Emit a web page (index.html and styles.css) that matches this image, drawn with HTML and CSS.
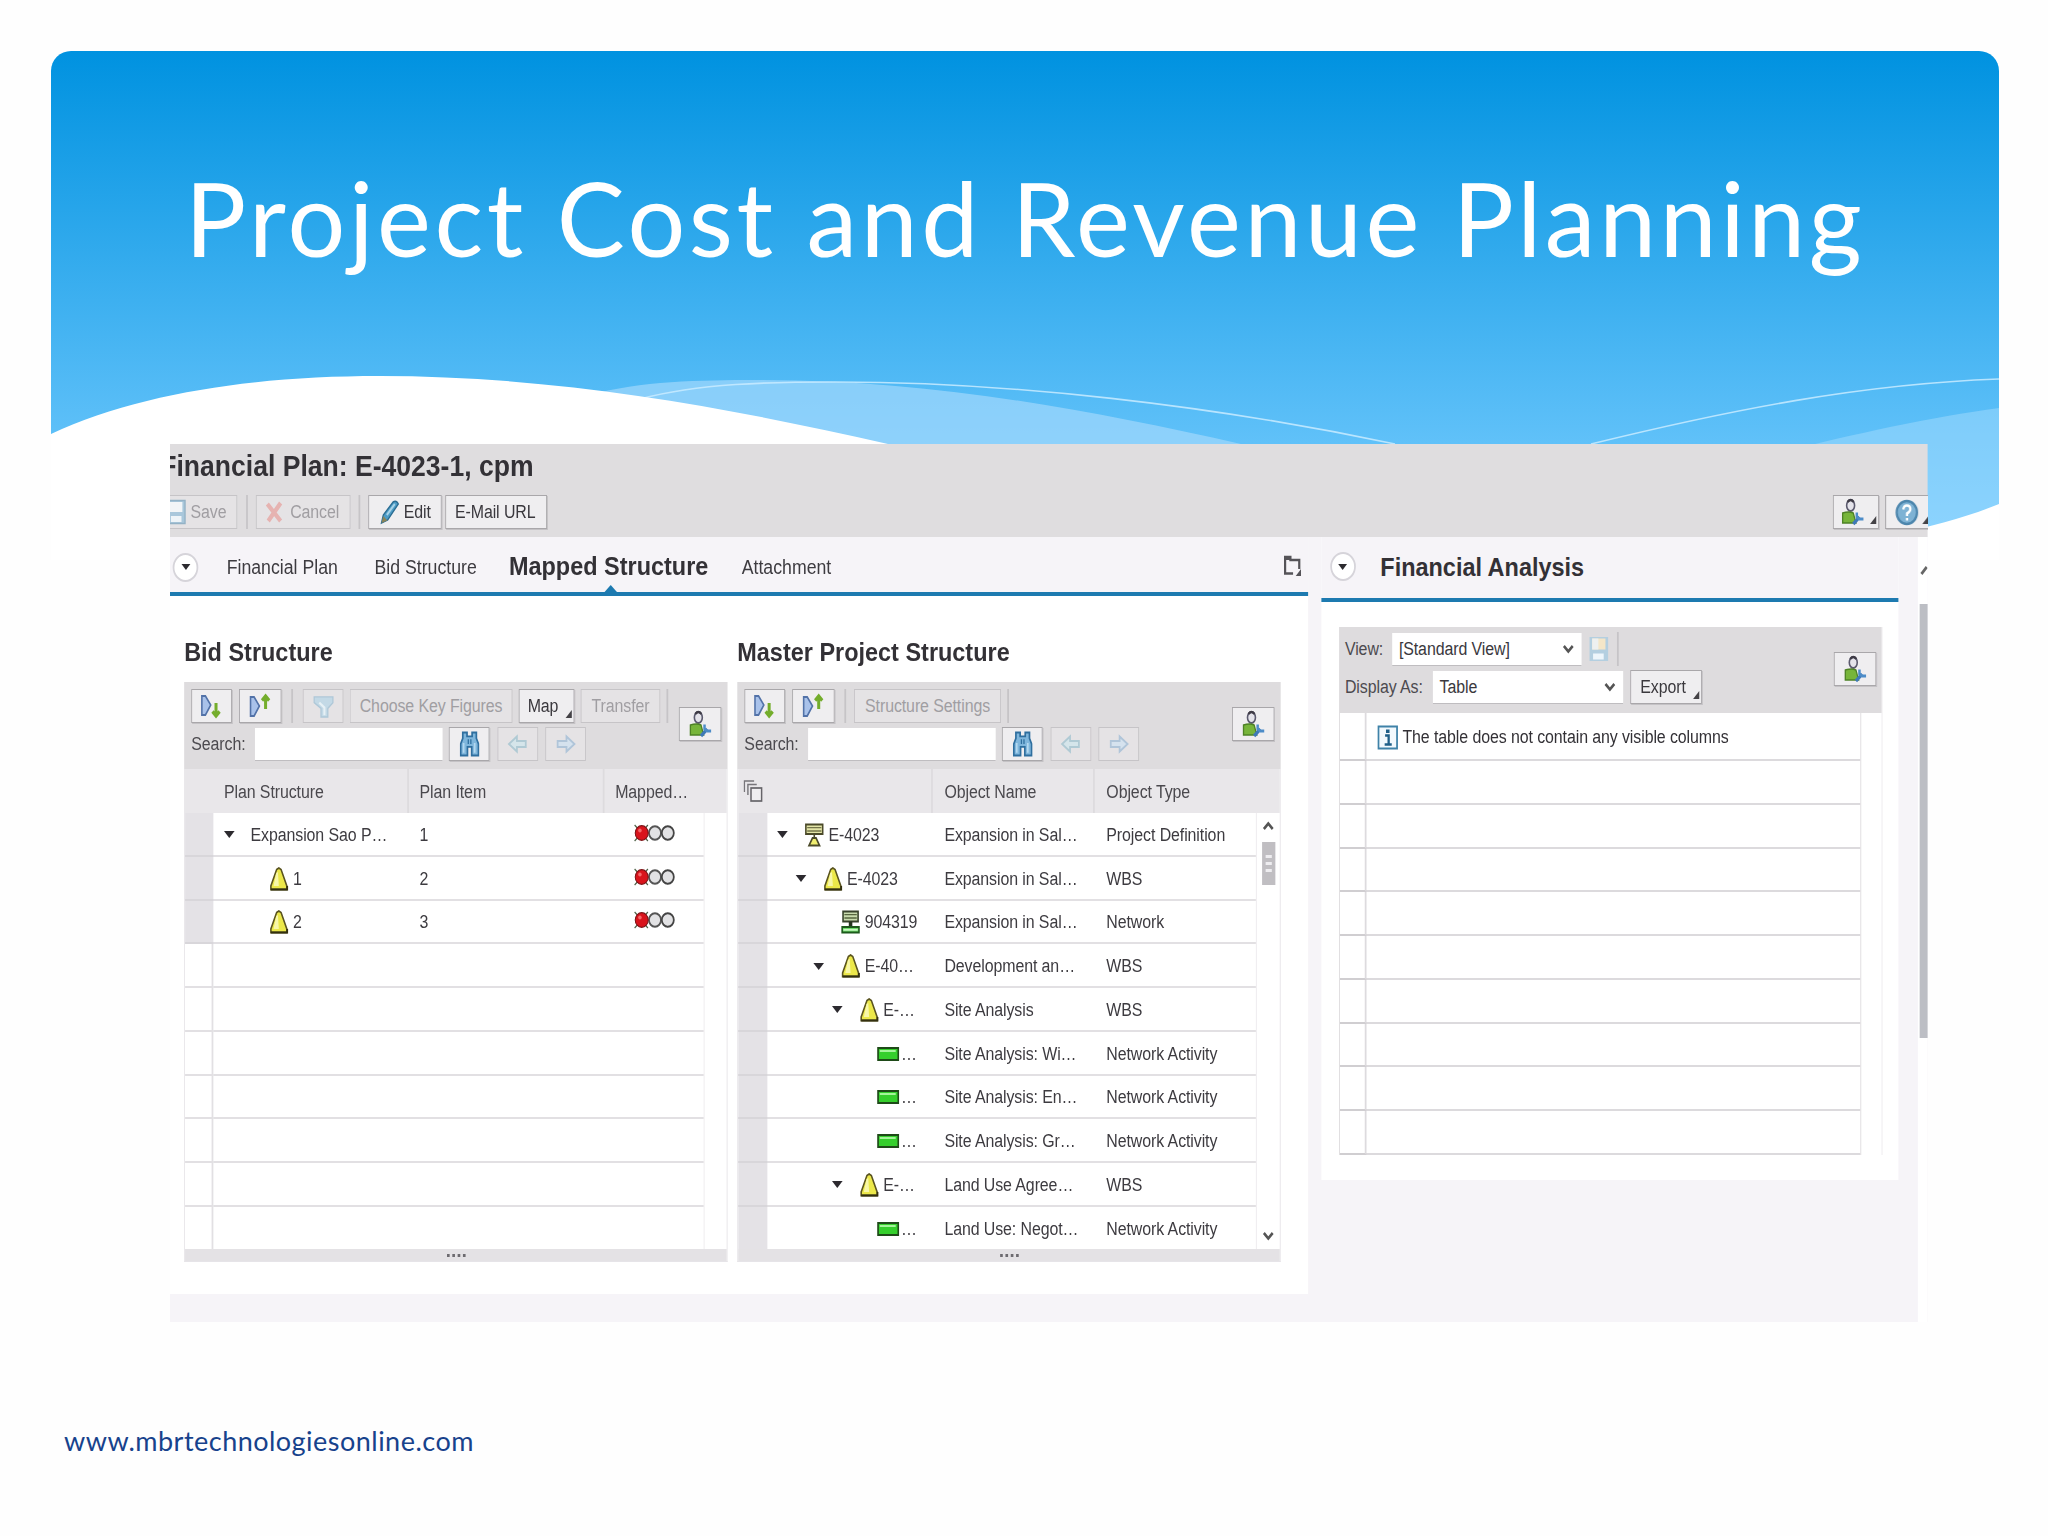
FILE: index.html
```
<!DOCTYPE html>
<html lang="en">
<head>
	<meta charset="utf-8">
	<title>Project Cost and Revenue Planning</title>
	<link rel="stylesheet" href="styles.css">
</head>
<body>
	<!-- icons -->
	<svg class="defs">
		<symbol id="wbs" viewBox="0 0 22 24">
			<path d="M8.5 2.5 L11 1 L13.5 2.5 L20 19 V22.5 H2 V19 Z" fill="#ece84a" stroke="#5a5420" stroke-width="1.8"/>
			<path d="M8 6 L5 19 H11 L10 5 Z" fill="#f8f7a8"/>
			<path d="M2 22.5 H20.5 L20.5 19" fill="none" stroke="#33300f" stroke-width="2"/>
		</symbol>
		<symbol id="project" viewBox="0 0 22 24">
			<path d="M1.5 1.5 H20.5 V11 H1.5 Z" fill="#e4e6a8" stroke="#4b4a2a" stroke-width="1.8"/>
			<path d="M3 4.7 H19 M3 8 H19" stroke="#74754a" stroke-width="1.3"/>
			<path d="M11 11 V15 M9 15 H13 L17 22.5 H5 Z" fill="#f0ee70" stroke="#4b4a2a" stroke-width="1.8"/>
		</symbol>
		<symbol id="network" viewBox="0 0 22 24">
			<path d="M2.5 1.5 H19.5 V11.5 H2.5 Z" fill="#c9dcae" stroke="#38432c" stroke-width="1.8"/>
			<path d="M4 4.7 H18 M4 8 H18" stroke="#56653f" stroke-width="1.3"/>
			<path d="M11 11.5 V16" stroke="#263420" stroke-width="4"/>
			<path d="M1.5 17 H20.5 V22.5 H1.5 Z" fill="#6fdc6a" stroke="#1d5a1c" stroke-width="1.8"/>
			<path d="M3 19.8 H19" stroke="#e8ffe0" stroke-width="1.2"/>
		</symbol>
		<symbol id="activity" viewBox="0 0 25 14">
			<rect x="1" y="1" width="23" height="12" fill="#35cf2c" stroke="#1e4a18" stroke-width="2"/>
			<path d="M3 4 H21" stroke="#a4f59a" stroke-width="2"/>
		</symbol>
		<symbol id="lights" viewBox="0 0 47 18">
			<path d="M1 1 L4 4 M1 17 L4 14 M16 1 L13 4 M16 17 L13 14" stroke="#50634a" stroke-width="1.4"/>
			<circle cx="24" cy="9" r="6.8" fill="#e2e2e4" stroke="#555" stroke-width="2"/>
			<circle cx="38.5" cy="9" r="6.8" fill="#e2e2e4" stroke="#444" stroke-width="2"/>
			<circle cx="9" cy="9" r="7.3" fill="#d9141c" stroke="#7d1216" stroke-width="1.2"/>
			<circle cx="7" cy="6.5" r="2" fill="#f4686a"/>
		</symbol>
		<symbol id="expand" viewBox="0 0 26 26">
			<path d="M2 3 L6 3 L12 12 L6 22 L2 22 Z" fill="#a9c2ea" stroke="#5272a8" stroke-width="1.8"/>
			<path d="M18 10 V22 M14 18.5 L18 23 L22 18.5" fill="none" stroke="#74ad2c" stroke-width="3.4"/>
		</symbol>
		<symbol id="collapse" viewBox="0 0 26 26">
			<path d="M2 4 L6 4 L12 13 L6 23 L2 23 Z" fill="#a9c2ea" stroke="#5272a8" stroke-width="1.8"/>
			<path d="M19 16 V4 M15 7.5 L19 3 L23 7.5" fill="none" stroke="#74ad2c" stroke-width="3.4"/>
		</symbol>
		<symbol id="filter" viewBox="0 0 26 26">
			<path d="M2 3 H24 V9 L18 15 V24 H10 V15 L2 9 Z" fill="#c3d9e6" stroke="#afc8d8" stroke-width="1.5"/>
			<path d="M8 9 L14 14 V22" fill="none" stroke="#e6f0f5" stroke-width="2.5"/>
		</symbol>
		<symbol id="person" viewBox="0 0 26 28">
			<ellipse cx="11" cy="7.5" rx="4.5" ry="5.5" fill="#e4e3ea" stroke="#5b5a6e" stroke-width="1.8"/>
			<path d="M7.5 4 Q11 0 14.5 4" fill="none" stroke="#3e3b46" stroke-width="2.4"/>
			<path d="M2 15 Q9 13 14 15 L17 25 H2 Z" fill="#77b53a" stroke="#4e8226" stroke-width="1.5"/>
			<path d="M14 26 L21 19" stroke="#3f79b8" stroke-width="3.6"/>
			<path d="M18 14.5 V19 L21 21 H25.5" fill="none" stroke="#4d8cc8" stroke-width="2.8"/>
		</symbol>
		<symbol id="binoculars" viewBox="0 0 24 28">
			<path d="M4 2 H9 V6 H15 V2 H20 V8 L22.5 14 V26 H14.5 V17 H9.5 V26 H1.5 V14 L4 8 Z" fill="#7fb6dc" stroke="#2f6f9f" stroke-width="2"/>
			<path d="M5 13 V23 M18 13 V23" stroke="#b4d9f0" stroke-width="2"/>
			<path d="M10.5 9 V14 M13.5 9 V14" stroke="#2f6f9f" stroke-width="1.5"/>
		</symbol>
		<symbol id="prev" viewBox="0 0 24 20">
			<path d="M2 10 L11 2.5 V7 H21 V13 H11 V17.5 Z" fill="#d5e5ea" stroke="#b0cad4" stroke-width="2"/>
		</symbol>
		<symbol id="next" viewBox="0 0 24 20">
			<path d="M22 10 L13 2.5 V7 H3 V13 H13 V17.5 Z" fill="#d5e2ee" stroke="#b0c5d9" stroke-width="2"/>
		</symbol>
		<symbol id="disk" viewBox="0 0 24 26">
			<rect x="2" y="1.5" width="20" height="23" fill="#a9c7db" stroke="#94b2c6" stroke-width="1.5"/>
			<rect x="5" y="3" width="14" height="10" fill="#f2f5f7"/>
			<rect x="6" y="17" width="12" height="6" fill="#eef4f8"/>
		</symbol>
		<symbol id="copies" viewBox="0 0 22 22">
			<path d="M1 12 V1 H12 M5 15 V4.5 H15" fill="none" stroke="#77757a" stroke-width="1.6"/>
			<rect x="8.5" y="8" width="12" height="13" fill="#f0eef1" stroke="#666469" stroke-width="1.7"/>
		</symbol>
	</svg>

	<div class="slide">
		<svg class="banner" viewBox="0 0 2048 560">
			<defs>
				<linearGradient id="sky" x1="0" y1="0" x2="0" y2="1">
					<stop offset="0" stop-color="#0092e0"/>
					<stop offset=".8" stop-color="#60c1f9"/>
					<stop offset="1" stop-color="#76ccff"/>
				</linearGradient>
				<clipPath id="card"><rect x="51" y="51" width="1948" height="600" rx="20"/></clipPath>
			</defs>
			<g clip-path="url(#card)">
				<rect x="51" y="51" width="1948" height="490" fill="url(#sky)"/>
				<path d="M590 395 C640 381 700 380 757 380 C930 380 1080 408 1241 444 C1300 458 1400 500 1500 540 H590 Z" fill="#a4d8fc" opacity=".68"/>
				<path d="M1700 474 C1800 446 1910 420 1999 408 V560 H1700 Z" fill="#a4dcfd" opacity=".5"/>
				<path d="M640 399 C700 383 770 382 836 382 C1010 382 1210 405 1395 444" class="thread"/>
				<path d="M1591 444 C1730 410 1860 384 1999 379" class="thread"/>
				<path d="M51 434 C140 392 260 376 379 376 C560 376 730 408 888 444 C1240 530 1500 570 1800 545 C1870 541 1940 528 1999 504 V560 H51 Z" fill="#fff"/>
			</g>
		</svg>

		<h1 class="title">Project Cost and Revenue Planning</h1>

		<div class="shot">
			<div class="app">
				<div class="app-head">
					<h2>Financial Plan: E-4023-1, cpm</h2>
					<div class="actions">
						<span class="btn off save"><svg width="24" height="26"><use href="#disk"/></svg>Save</span>
						<i class="sep"></i>
						<span class="btn off cancel"><svg width="22" height="22" viewBox="0 0 22 22"><path d="M3 3 L18 20 M18 2 L4 20" stroke="#e6b3b1" stroke-width="4.5"/></svg>Cancel</span>
						<i class="sep"></i>
						<span class="btn edit"><svg width="24" height="26" viewBox="0 0 24 26"><path d="M3 24 L5 16 L16 3 Q20 1 22 5 L10 21 Z" fill="#4d9cc6" stroke="#2b6c92" stroke-width="1.5"/><path d="M3 24 L5 17 L9.500 21.500 Z" fill="#8a8458"/><path d="M9 16 L18 5" stroke="#a9d3e8" stroke-width="2"/></svg>Edit</span>
						<span class="btn mail">E-Mail URL</span>
						<span class="btn corner user"><svg width="26" height="28"><use href="#person"/></svg></span>
						<span class="btn corner help"><svg width="27" height="27" viewBox="0 0 27 27"><circle cx="13.5" cy="13.5" r="11.5" fill="#7eb2d4" stroke="#4d86ad" stroke-width="2.5"/><path d="M9.500 10.500 Q10 6.500 13.500 6.500 Q17.500 6.500 17.500 10 Q17.500 12.500 13.700 14.500 V17 M13.700 19 V21.500" fill="none" stroke="#fff" stroke-width="2.6"/></svg></span>
					</div>
				</div>

				<div class="app-body">
					<div class="left">
						<div class="tabs">
							<span class="round"><i class="down"></i></span>
							<span class="tab t1">Financial Plan</span>
							<span class="tab t2">Bid Structure</span>
							<span class="tab t3 active">Mapped Structure</span>
							<span class="tab t4">Attachment</span>
							<svg class="personalize" width="24" height="24" viewBox="0 0 24 24"><path d="M12 19.500 H3 V3 H9 V6 H19 V15" fill="none" stroke="#555358" stroke-width="2.5"/><path d="M2 2 H9 V6 H2 Z" fill="#555358"/><path d="M21 15 V22 H15 Z" fill="#555358"/></svg>
						</div>
						<div class="panels">
							<div class="panel">
								<h3>Bid Structure</h3>
								<div class="bar">
									<div class="tools">
										<div class="line">
											<span class="btn w46"><svg width="26" height="26"><use href="#expand"/></svg></span>
											<span class="btn w48"><svg width="26" height="26"><use href="#collapse"/></svg></span>
											<i class="sep"></i>
											<span class="btn off w46"><svg width="25" height="25"><use href="#filter"/></svg></span>
											<span class="btn off keys">Choose Key Figures</span>
											<span class="btn corner map">Map</span>
											<span class="btn off transfer">Transfer</span>
											<i class="sep last"></i>
										</div>
										<div class="line">
											<label>Search:</label><span class="input"></span>
											<span class="btn w46"><svg width="23" height="28"><use href="#binoculars"/></svg></span>
											<span class="btn off w46"><svg width="24" height="20"><use href="#prev"/></svg></span>
											<span class="btn off w46"><svg width="24" height="20"><use href="#next"/></svg></span>
										</div>
									</div>
									<span class="btn w48 gear"><svg width="26" height="28"><use href="#person"/></svg></span>
								</div>
								<div class="grid bid">
									<div class="row head"><b></b><span>Plan Structure</span><span>Plan Item</span><span>Mapped…</span></div>
									<div class="body">
										<div class="rows">
											<div class="row"><b></b><span><i class="down"></i><em>Expansion Sao P…</em></span><span>1</span><span class="lt"><svg width="47" height="18"><use href="#lights"/></svg></span></div>
											<div class="row"><b></b><span class="kid"><svg width="22" height="24"><use href="#wbs"/></svg>1</span><span>2</span><span class="lt"><svg width="47" height="18"><use href="#lights"/></svg></span></div>
											<div class="row"><b></b><span class="kid"><svg width="22" height="24"><use href="#wbs"/></svg>2</span><span>3</span><span class="lt"><svg width="47" height="18"><use href="#lights"/></svg></span></div>
											<div class="row empty"><b></b></div>
											<div class="row empty"><b></b></div>
											<div class="row empty"><b></b></div>
											<div class="row empty"><b></b></div>
											<div class="row empty"><b></b></div>
											<div class="row empty"><b></b></div>
											<div class="row empty"><b></b></div>
										</div>
									</div>
									<div class="grip"><i></i><i></i><i></i><i></i></div>
								</div>
							</div>

							<div class="panel">
								<h3>Master Project Structure</h3>
								<div class="bar">
									<div class="tools">
										<div class="line">
											<span class="btn w46"><svg width="26" height="26"><use href="#expand"/></svg></span>
											<span class="btn w48"><svg width="26" height="26"><use href="#collapse"/></svg></span>
											<i class="sep"></i>
											<span class="btn off settings">Structure Settings</span>
											<i class="sep last"></i>
										</div>
										<div class="line">
											<label>Search:</label><span class="input"></span>
											<span class="btn w46"><svg width="23" height="28"><use href="#binoculars"/></svg></span>
											<span class="btn off w46"><svg width="24" height="20"><use href="#prev"/></svg></span>
											<span class="btn off w46"><svg width="24" height="20"><use href="#next"/></svg></span>
										</div>
									</div>
									<span class="btn w48 gear"><svg width="26" height="28"><use href="#person"/></svg></span>
								</div>
								<div class="grid master">
									<div class="row head"><b><svg width="22" height="22"><use href="#copies"/></svg></b><span></span><span>Object Name</span><span>Object Type</span></div>
									<div class="body">
										<div class="rows">
											<div class="row"><b></b><span class="l0"><i class="down"></i><svg width="22" height="24"><use href="#project"/></svg>E-4023</span><span>Expansion in Sal…</span><span>Project Definition</span></div>
											<div class="row"><b></b><span class="l1"><i class="down"></i><svg width="22" height="24"><use href="#wbs"/></svg>E-4023</span><span>Expansion in Sal…</span><span>WBS</span></div>
											<div class="row"><b></b><span class="l2"><i class="none"></i><svg width="22" height="24"><use href="#network"/></svg>904319</span><span>Expansion in Sal…</span><span>Network</span></div>
											<div class="row"><b></b><span class="l2"><i class="down"></i><svg width="22" height="24"><use href="#wbs"/></svg>E-40…</span><span>Development an…</span><span>WBS</span></div>
											<div class="row"><b></b><span class="l3"><i class="down"></i><svg width="22" height="24"><use href="#wbs"/></svg>E-…</span><span>Site Analysis</span><span>WBS</span></div>
											<div class="row"><b></b><span class="l4"><i class="none"></i><svg width="25" height="14"><use href="#activity"/></svg>…</span><span>Site Analysis: Wi…</span><span>Network Activity</span></div>
											<div class="row"><b></b><span class="l4"><i class="none"></i><svg width="25" height="14"><use href="#activity"/></svg>…</span><span>Site Analysis: En…</span><span>Network Activity</span></div>
											<div class="row"><b></b><span class="l4"><i class="none"></i><svg width="25" height="14"><use href="#activity"/></svg>…</span><span>Site Analysis: Gr…</span><span>Network Activity</span></div>
											<div class="row"><b></b><span class="l3"><i class="down"></i><svg width="22" height="24"><use href="#wbs"/></svg>E-…</span><span>Land Use Agree…</span><span>WBS</span></div>
											<div class="row"><b></b><span class="l4"><i class="none"></i><svg width="25" height="14"><use href="#activity"/></svg>…</span><span>Land Use: Negot…</span><span>Network Activity</span></div>
										</div>
										<div class="scroll">
											<svg width="14" height="10" viewBox="0 0 14 10"><path d="M2 8 L7 2.500 L12 8" fill="none" stroke="#555" stroke-width="2.8"/></svg>
											<div class="thumb"><i></i><i></i><i></i></div>
											<svg class="end" width="14" height="10" viewBox="0 0 14 10"><path d="M2 2 L7 7.500 L12 2" fill="none" stroke="#555" stroke-width="2.8"/></svg>
										</div>
									</div>
									<div class="grip"><i></i><i></i><i></i><i></i></div>
								</div>
							</div>
						</div>
					</div>

					<div class="right">
						<div class="tabs">
							<span class="round"><i class="down"></i></span>
							<h3>Financial Analysis</h3>
						</div>
						<div class="analysis">
							<div class="bar">
								<div class="tools">
									<div class="line">
										<label>View:</label>
										<span class="input select view">[Standard View]<svg width="14" height="10" viewBox="0 0 14 10"><path d="M2 2 L7 7.500 L12 2" fill="none" stroke="#555" stroke-width="2.8"/></svg></span>
										<svg class="store" width="23" height="26" viewBox="0 0 23 26"><rect x="1" y="1" width="21" height="24" fill="#b4cfe0"/><rect x="4" y="2.500" width="15" height="11" fill="#f4e6c8"/><rect x="4" y="2.500" width="7" height="11" fill="#eef0f0"/><rect x="5" y="17.500" width="12" height="6" fill="#eef6fb"/></svg>
										<i class="sep"></i>
									</div>
									<div class="line">
										<label>Display As:</label>
										<span class="input select as">Table<svg width="14" height="10" viewBox="0 0 14 10"><path d="M2 2 L7 7.500 L12 2" fill="none" stroke="#555" stroke-width="2.8"/></svg></span>
										<span class="btn corner export">Export</span>
									</div>
								</div>
								<span class="btn w48 gear"><svg width="26" height="28"><use href="#person"/></svg></span>
							</div>
							<div class="rows">
								<div class="row first"><b></b><svg width="24" height="25" viewBox="0 0 24 25"><rect x="1.5" y="1.5" width="21" height="22" fill="#f2f9fd" stroke="#3f82a8" stroke-width="2"/><path d="M9 10.500 H13 V19 M8.500 19.500 H16.500" fill="none" stroke="#1f5f88" stroke-width="2.6"/><rect x="10" y="4.500" width="4" height="3.5" fill="#1f5f88"/></svg>The table does not contain any visible columns</div>
								<div class="row"><b></b></div>
								<div class="row"><b></b></div>
								<div class="row"><b></b></div>
								<div class="row"><b></b></div>
								<div class="row"><b></b></div>
								<div class="row"><b></b></div>
								<div class="row"><b></b></div>
								<div class="row"><b></b></div>
								<div class="row"><b></b></div>
							</div>
						</div>
					</div>

					<div class="page-scroll">
						<svg width="9" height="10" viewBox="0 0 9 10"><path d="M2 9 L8 2" stroke="#666" stroke-width="3"/></svg>
						<div class="thumb"></div>
					</div>
				</div>
			</div>
		</div>

		<div class="footer">www.mbrtechnologiesonline.com</div>
	</div>
</body>
</html>
```
FILE: styles.css
```
*					{ box-sizing: border-box; }
body				{ margin: 0; background: #fefefe; }
.defs				{ display: none; }
h1, h2, h3			{ margin: 0; }

.slide				{ position: relative; width: 2048px; height: 1536px; overflow: hidden; }
.banner				{ position: absolute; left: 0; top: 0; width: 2048px; height: 560px; }
.thread				{ fill: none; stroke: #c9ebff; stroke-width: 1.6; opacity: .85; }
.title				{ position: relative; padding: 158px 0 0 185px; height: 444px;
					  font: 400 102px/120px Lato, sans-serif; letter-spacing: 3.6px; color: #fff; white-space: nowrap; }
.footer				{ padding: 101px 0 0 64px; font: 27px/36px Lato, sans-serif; letter-spacing: .48px; color: #17428c; }

/* the application is narrowed horizontally as a whole */
.shot				{ position: relative; margin-left: 170px; width: 1758px; height: 878px; overflow: hidden; }
.app				{ width: 1986.4px; height: 878px; transform: scaleX(.885); transform-origin: 0 0;
					  font: 18px/24px "Liberation Sans", Arial, sans-serif; letter-spacing: -.1px; color: #3d3b40;
					  white-space: nowrap; }

.app-head			{ height: 93px; background: #dfdddf; }
.app-head h2		{ height: 50px; margin-left: -11px; padding-top: 5px; font-size: 30px; line-height: 34px;
					  letter-spacing: 0; color: #333136; }
.actions			{ display: flex; align-items: center; height: 36px; }

.btn				{ position: relative; display: flex; flex: none; align-items: center; justify-content: center;
					  height: 34px; border: 1px solid #a9a7aa; background: #efeef0; color: #3a383d;
					  box-shadow: 1px 1px 0 #c4c2c5; }
.btn.off			{ border-color: #c6c4c7; background: #e5e3e5; color: #a09ea2; box-shadow: none; }
.btn.corner:after	{ content: ""; position: absolute; right: 2px; bottom: 4px;
					  border-left: 7px solid transparent; border-bottom: 8px solid #444246; }
.sep				{ width: 2px; height: 34px; flex: none; background: #c6c4c7; }
.w46				{ width: 46px; }
.w48				{ width: 48px; }

.save				{ width: 89px; margin-left: -13px; padding-right: 4px; gap: 4px; }
.save + .sep		{ margin: 0 9px 0 10px; }
.cancel				{ width: 107px; padding-right: 3px; gap: 7px; }
.cancel + .sep		{ margin: 0 9px; }
.edit				{ width: 83px; gap: 4px; }
.mail				{ width: 115px; margin-left: 4px; padding-right: 2px; }
.user				{ width: 52px; margin-left: auto; padding-right: 8px; }
.help				{ width: 60px; margin: 0 -12px 0 7px; padding-right: 12px; }
.help.corner:after	{ right: 10px; }

.app-body			{ display: flex; height: 785px; background: #f6f4f8; }
.left				{ width: 1286px; height: 757px; margin-right: 15px; background: #fff; }
.right				{ width: 653px; height: 643px; margin-right: 22px; background: #fff; }
.tabs				{ display: flex; align-items: center; height: 59px; padding: 3px 5px 0 0;
					  background: #f6f4f8; border-bottom: 4px solid #1d7ab0; font-size: 20px; letter-spacing: 0; }
.right .tabs		{ height: 65px; padding: 0 0 2px; }
.round				{ display: flex; align-items: center; justify-content: center; width: 29px; height: 29px;
					  margin: 2px 0 0 3px; border: 2px solid #d6d4da; border-radius: 50%; background: #fff; }
.right .round		{ margin: 0 28px 0 10px; }
.down				{ flex: none; width: 0; height: 0; border: 6px solid transparent; border-top: 7px solid #2c2a2f; border-bottom: 0; }
.tabs .down			{ border-width: 6px 5px 0; }
.none				{ flex: none; width: 12px; }
.tab				{ position: relative; padding-top: 2px; }
.t1					{ margin-left: 32px; width: 167px; }
.t2					{ width: 152px; }
.t3					{ width: 263px; }
.tab.active			{ padding-top: 0; font-size: 26.5px; font-weight: bold; color: #333136; }
.active:after		{ content: ""; position: absolute; left: 107px; bottom: -15px;
					  border: 8px solid transparent; border-top: 0; border-bottom: 8px solid #1d7ab0; }
.personalize		{ margin-left: auto; }
h3					{ font-size: 26.5px; line-height: 30px; letter-spacing: 0; color: #333136; }

.panels				{ display: flex; gap: 11px; padding: 41px 0 0 16px; }
.panel				{ width: 614px; }
.panel h3			{ height: 45px; }
.bar				{ display: flex; justify-content: space-between; height: 87px; padding: 7px 7px 0 8px; background: #dedcde; }
.tools				{ display: flex; flex-direction: column; gap: 4px; }
.line				{ display: flex; align-items: center; height: 34px; gap: 7px; }
.line .sep			{ margin: 0 4px; }
.line .last			{ margin-left: 0; }
.line label			{ width: 65px; color: #4c4a4f; }
.line .input + .btn + .btn,
.line .input + .btn + .btn + .btn	{ margin-left: 1.5px; }
.line .w48			{ margin-left: 1px; }
.keys				{ width: 184px; }
.map				{ width: 63px; padding-right: 8px; }
.transfer			{ width: 90px; }
.settings			{ width: 166px; margin-left: -2px; }
.input				{ width: 212px; height: 33px; background: #fff; border-bottom: 1px solid #bfbdc0; }
.gear				{ margin-top: 18px; }

.grid				{ border: 1px solid #e6e4e8; border-top: 0; background: #fff; }
.row				{ display: flex; align-items: center; height: 43.75px; border-bottom: 2px solid #e2e0e3; }
.row b				{ display: flex; align-items: center; justify-content: center; flex: none; align-self: stretch; width: 32px;
					  margin-bottom: -2px; background: #e4e2e6; border-bottom: 2px solid #d8d6da; }
.row > span			{ display: flex; align-items: center; height: 24px; padding-top: 2px; }
.row em				{ font-style: normal; }
.row.empty b		{ background: #fff; border-right: 2px solid #dddbde; border-color: #e2e0e3; }
.row.head			{ height: 44px; background: #e9e7ea; border: 0; color: #4a484d; }
.row.head b			{ margin: 0; background: none; border: 0; }
.row.head > span	{ height: 44px; }
.row.head > span + span { margin-left: -2px; border-left: 2px solid #dddbde; }
.body				{ display: flex; height: 436px; overflow: hidden; }
.rows				{ width: 587px; }
.body .rows			{ border-right: 1px solid #eceaed; }
.bid .row > span:nth-child(2)	{ width: 221px; padding-left: 12px; }
.bid .row > span:nth-child(3)	{ width: 221px; padding-left: 12px; }
.bid .row > span:nth-child(4)	{ padding-left: 12px; }
.bid .head > span:nth-child(3)	{ width: 223px; }
.bid em				{ margin-left: 18px; }
.bid .row .kid svg	{ margin: 0 5px 0 51px; }
.bid .row .lt svg	{ margin: -4px 0 0 21px; }

.master .row b		{ width: 33px; }
.master .row > span:nth-child(2)	{ width: 187px; }
.master .row > span:nth-child(3)	{ width: 183px; padding-left: 13px; }
.master .row > span:nth-child(4)	{ padding-left: 13px; }
.master .head > span:nth-child(3)	{ width: 185px; }
.master .row span svg	{ margin: 0 5px 0 19px; }
.master .row .l4 svg	{ margin: 0 2px 0 18px; }
.l0					{ padding-left: 11px; }
.l1					{ padding-left: 32px; }
.l2					{ padding-left: 52px; }
.l3					{ padding-left: 73px; }
.l4					{ padding-left: 94px; }
.scroll				{ display: flex; flex-direction: column; align-items: center; width: 26px; padding: 8px 0; }
.scroll .thumb		{ display: flex; flex-direction: column; align-items: center; justify-content: center; gap: 4px;
					  width: 15px; height: 43px; margin-top: 11px; background: #c0bec2; }
.scroll .thumb i	{ width: 7px; height: 3px; background: #eeedf0; }
.scroll .end		{ margin-top: auto; }
.grip				{ display: flex; align-items: center; justify-content: center; gap: 3px; height: 12px; background: #e4e2e5; }
.grip i				{ width: 3px; height: 3px; background: #6d6b70; }

.analysis			{ margin: 25px 18px 0 20px; border-right: 1px solid #eceaed; }
.analysis .bar		{ height: 86px; padding: 5px 6px 0 7px; }
.analysis .line		{ gap: 8px; }
.analysis label		{ width: 45px; }
.analysis .line + .line label	{ width: 91px; }
.select				{ display: flex; align-items: center; justify-content: space-between; padding: 0 8px 0 8px; color: #3a383d; }
.view				{ width: 214px; }
.as					{ width: 215px; }
.export				{ width: 81px; padding-right: 6px; }
.store + .sep		{ margin-left: 1px; }
.analysis .gear		{ margin-top: 20px; }
.analysis .rows		{ width: 590px; border-left: 1px solid #dddbde; border-right: 1px solid #dddbde; }
.analysis .row		{ border-bottom-color: #dcdadd; height: 43.75px; }
.analysis .row b	{ width: 30px; background: none; border-right: 2px solid #dddbde; border-bottom-color: #d0ced1; }
.analysis .first	{ height: 48px; padding-top: 2px; color: #333136; }
.analysis .first b	{ margin-top: -2px; }
.first svg			{ margin: 0 5px 0 12px; }

.page-scroll		{ width: 11px; padding-top: 28px; background: #fff; }
.page-scroll svg	{ display: block; margin: 0 0 29px 2px; }
.page-scroll .thumb	{ width: 9px; height: 434px; margin-left: 2px; background: #bcbec4; }
```
